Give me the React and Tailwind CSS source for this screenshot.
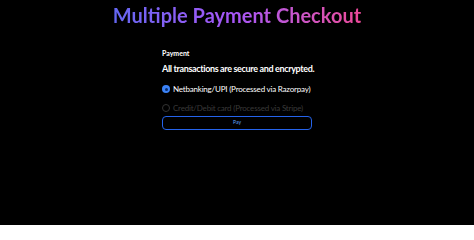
export default function App() {
  return (
    <div className="min-h-[225px] w-full bg-black text-white" style={{ fontFamily: 'Lato, "Noto Sans", sans-serif' }}>
      <h1 className="pt-[1px] text-center text-[20px] font-bold leading-[28px]">
        <span className="bg-gradient-to-r from-[#6366f1] via-[#a855f7] to-[#ec4899] bg-clip-text text-transparent">Multiple Payment Checkout</span>
      </h1>
      <div className="mx-auto mt-[19px] w-[150px]">
        <div className="text-[7px] font-bold leading-[10px]">Payment</div>
        <div className="mt-[4px] whitespace-nowrap text-[9px] font-bold leading-[14px] tracking-[-0.35px]">All transactions are secure and encrypted.</div>
        <div className="mt-[7px] flex items-center gap-[3px] whitespace-nowrap text-[8px] leading-[12px] tracking-[-0.2px]">
          <span className="flex h-[8px] w-[8px] shrink-0 items-center justify-center rounded-full bg-[#3b82f6]">
            <span className="h-[3px] w-[3px] rounded-full bg-[#0c2d6b]"></span>
          </span>
          <span>Netbanking/UPI (Processed via Razorpay)</span>
        </div>
        <div className="mt-[7px] flex items-center gap-[3px] whitespace-nowrap text-[8px] leading-[12px] tracking-[-0.2px] text-[#3a3a3a]">
          <span className="h-[8px] w-[8px] shrink-0 rounded-full border border-[#333]"></span>
          <span>Credit/Debit card (Processed via Stripe)</span>
        </div>
        <div className="mt-[2px] flex h-[14px] items-center justify-center rounded-[4px] border border-[#2563eb] text-[5px] text-[#60a5fa]">
          Pay
        </div>
      </div>
    </div>
  );
}
